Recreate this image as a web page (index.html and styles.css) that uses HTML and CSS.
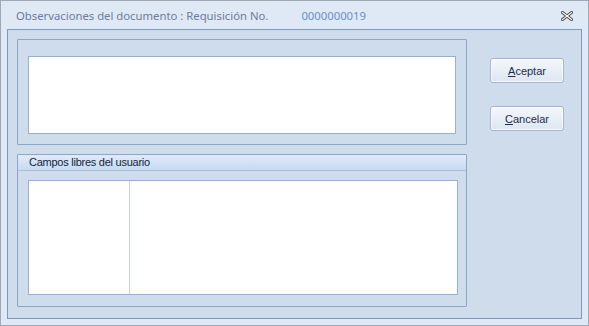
FILE: index.html
```html
<!DOCTYPE html>
<html lang="es">
<head>
    <meta charset="UTF-8">
    <title>Observaciones del documento</title>
    <link rel="stylesheet" href="styles.css">
</head>
<body>
    <div class="window">
        <div class="titlebar">
            <span class="title">Observaciones del documento : Requisición No.</span>
            <span class="doc-no">0000000019</span>
            <svg class="close" width="12" height="10" viewBox="0 0 12 10">
                <path d="M1.5 1.5 L10.5 8.5 M10.5 1.5 L1.5 8.5" stroke="#4a4a4a" stroke-width="3" stroke-linecap="square"/>
                <path d="M1.5 1.5 L10.5 8.5 M10.5 1.5 L1.5 8.5" stroke="#ffffff" stroke-width="1.2" stroke-linecap="square"/>
            </svg>
        </div>

        <div class="panel">
            <div class="main">
                <!-- Observaciones -->
                <div class="group notes">
                    <div class="memo"></div>
                </div>

                <!-- Campos libres -->
                <div class="group fields">
                    <div class="group-header">Campos libres del usuario</div>
                    <div class="grid">
                        <div class="grid-name"></div>
                        <div class="grid-value"></div>
                    </div>
                </div>
            </div>

            <div class="actions">
                <button class="btn"><u>A</u>ceptar</button>
                <button class="btn"><u>C</u>ancelar</button>
            </div>
        </div>
    </div>
</body>
</html>
```

FILE: styles.css
```css
* {
    box-sizing: border-box;
}
body {
    margin: 0;
    font-family: "Liberation Sans", Arial, sans-serif;
    font-size: 11px;
    background: #dfe9f5;
}
.window {
    width: 589px;
    height: 326px;
    border: 1px solid #9ea8b6;
    background: #dfe9f5;
}
.titlebar {
    height: 28px;
    display: flex;
    align-items: center;
    padding: 0 15px 0 15px;
    font-family: "Noto Sans", "Open Sans", sans-serif;
    font-size: 11.3px;
}
.title {
    color: #6c7b9c;
}
.doc-no {
    color: #6590d4;
    margin-left: 33px;
}
.close {
    margin-left: auto;
    margin-top: 2px;
}
.panel {
    height: 290px;
    margin: 0 6px;
    border: 1px solid #7f99bd;
    background: #cfdcec;
    padding: 9px 0 0 9px;
    display: flex;
}
.main {
    width: 450px;
    display: flex;
    flex-direction: column;
    gap: 9px;
}
.group {
    border: 1px solid #8ca5c9;
    border-radius: 1px;
}
.notes {
    height: 106px;
    padding: 16px 10px 0 10px;
}
.memo {
    height: 78px;
    background: #fff;
    border: 1px solid #98afd0;
}
.fields {
    height: 153px;
    padding: 0;
}
.group-header {
    height: 16px;
    line-height: 15px;
    padding-left: 11px;
    color: #0f1f3a;
    letter-spacing: -0.25px;
    background: linear-gradient(#e0ebf9, #c6daf1);
    border-bottom: 1px solid #a9bfdc;
}
.grid {
    margin: 9px 8px 0 10px;
    height: 115px;
    background: #fff;
    border: 1px solid #98afd0;
    display: flex;
}
.grid-name {
    width: 101px;
    border-right: 1px solid #c6d3e5;
}
.actions {
    margin-left: 23px;
    padding-top: 19px;
    display: flex;
    flex-direction: column;
    gap: 23px;
}
.btn {
    width: 74px;
    height: 25px;
    padding: 0;
    font-family: "Liberation Sans", Arial, sans-serif;
    font-size: 11px;
    color: #1c2c48;
    border: 1px solid #a3b6cf;
    border-radius: 3px;
    background: linear-gradient(#f4f8fc, #dce6f2);
    box-shadow: inset 0 0 0 1px rgba(255, 255, 255, 0.8);
    cursor: pointer;
}
```
